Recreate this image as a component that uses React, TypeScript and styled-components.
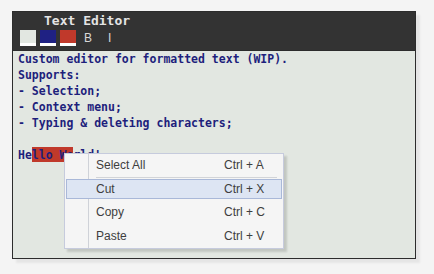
import React from "react";
import styled, { createGlobalStyle } from "styled-components";

const Global = createGlobalStyle`
  html, body { margin: 0; padding: 0; background: #f4f4f4; }
  body { width: 434px; height: 274px; overflow: hidden; }
`;

const Page = styled.div`
  padding: 11px 0 0 12px;
`;

const Window = styled.div`
  position: relative;
  width: 404px;
  height: 248px;
  box-sizing: border-box;
  border: 1px solid #2c2c2c;
  background: #e2e7e1;
  box-shadow: 4px 4px 2px rgba(0, 0, 0, 0.06);
  display: flex;
  flex-direction: column;
`;

const TitleBar = styled.div`
  background: #333333;
  height: 38px;
  padding: 0 0 0 7px;
  display: flex;
  flex-direction: column;
  gap: 1px;
`;

const Title = styled.div`
  font-family: "DejaVu Sans Mono", monospace;
  font-weight: bold;
  font-size: 13px;
  line-height: 17px;
  color: #e4e4e4;
  padding-left: 24px;
`;

const Toolbar = styled.div`
  display: flex;
  align-items: flex-start;
  gap: 4px;
`;

const Swatch = styled.div<{ $color: string }>`
  width: 16px;
  height: 13px;
  background: ${(p) => p.$color};
  border-bottom: 3px solid #ffffff;
`;

const FormatButton = styled.div<{ $first?: boolean }>`
  width: 24px;
  margin-left: ${(p) => (p.$first ? "4px" : "-4px")};
  font-family: "Liberation Sans", Arial, sans-serif;
  font-size: 12px;
  line-height: 16px;
  color: #d8d8d8;
`;

const Content = styled.div`
  position: relative;
  flex: 1;
  border-top: 1px solid #2c2c2c;
  padding: 0 0 0 5px;
  font-family: "DejaVu Sans Mono", monospace;
  font-weight: bold;
  font-size: 11.5px;
  line-height: 16px;
  color: #1e1f7c;
  white-space: pre;
`;

const Line = styled.div`
  height: 16px;
`;

const Selected = styled.span`
  display: inline-block;
  background: #c0392b;
  height: 15px;
  vertical-align: top;
`;

const Menu = styled.div`
  position: absolute;
  left: 51px;
  top: 102px;
  width: 220px;
  height: 96px;
  box-sizing: border-box;
  background: #f5f5f5;
  border: 1px solid #c6cbdd;
  box-shadow: 3px 3px 2px rgba(0, 0, 0, 0.14);
  font-family: "Liberation Sans", Arial, sans-serif;
  font-weight: normal;
  font-size: 12px;
  color: #3e3e3e;
  white-space: nowrap;

  &::before {
    content: "";
    position: absolute;
    left: 23px;
    top: 0;
    bottom: 0;
    width: 1px;
    background: #cfd2d8;
  }
`;

const MenuItem = styled.div<{ $h: number; $active?: boolean }>`
  position: relative;
  display: flex;
  align-items: center;
  box-sizing: border-box;
  height: ${(p) => p.$h}px;
  padding-left: ${(p) => (p.$active ? 29 : 31)}px;
  margin: ${(p) => (p.$active ? "1px 1px" : "0")};
  background: ${(p) => (p.$active ? "#dde5f3" : "transparent")};
  border: ${(p) => (p.$active ? "1px solid #a9b8d8" : "none")};
`;

const Label = styled.span`
  width: 128px;
`;

const Shortcut = styled.span``;

const Separator = styled.div`
  height: 1px;
  margin: 1px 6px 0 31px;
  background: #d2d4d8;
`;

export default function App() {
  return (
    <>
      <Global />
      <Page>
        <Window>
          <TitleBar>
            <Title>Text Editor</Title>
            <Toolbar>
              <Swatch $color="#e2e7e1" />
              <Swatch $color="#1f2183" />
              <Swatch $color="#c0392b" />
              <FormatButton $first>B</FormatButton>
              <FormatButton>I</FormatButton>
            </Toolbar>
          </TitleBar>
          <Content>
            <Line>Custom editor for formatted text (WIP).</Line>
            <Line>Supports:</Line>
            <Line>- Selection;</Line>
            <Line>- Context menu;</Line>
            <Line>- Typing &amp; deleting characters;</Line>
            <Line> </Line>
            <Line>
              He<Selected>llo Wo</Selected>rld!
            </Line>
            <Menu>
              <MenuItem $h={22}>
                <Label>Select All</Label>
                <Shortcut>Ctrl + A</Shortcut>
              </MenuItem>
              <Separator />
              <MenuItem $h={20} $active>
                <Label>Cut</Label>
                <Shortcut>Ctrl + X</Shortcut>
              </MenuItem>
              <MenuItem $h={24}>
                <Label>Copy</Label>
                <Shortcut>Ctrl + C</Shortcut>
              </MenuItem>
              <MenuItem $h={24}>
                <Label>Paste</Label>
                <Shortcut>Ctrl + V</Shortcut>
              </MenuItem>
            </Menu>
          </Content>
        </Window>
      </Page>
    </>
  );
}
